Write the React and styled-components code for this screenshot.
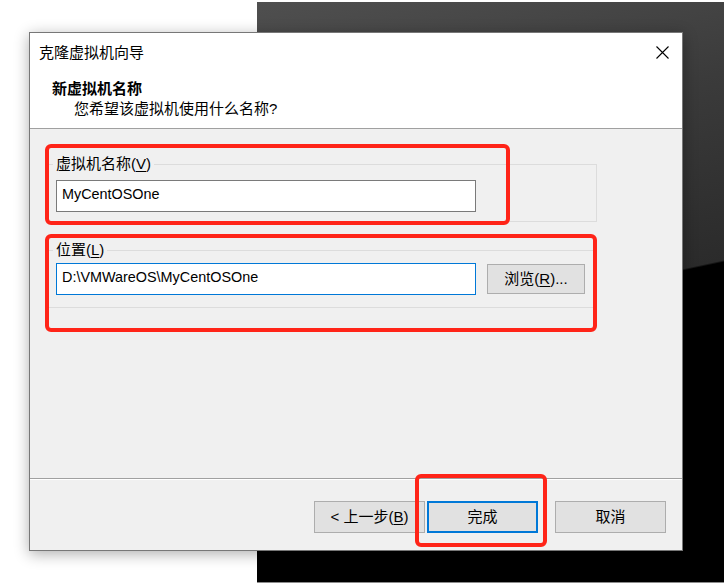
import React from "react";
import styled, { createGlobalStyle } from "styled-components";

const GlobalStyle = createGlobalStyle`
  html, body {
    margin: 0;
    padding: 0;
    background: #ffffff;
  }
  body {
    font-family: "Segoe UI", "Microsoft YaHei UI", "Liberation Sans", "Noto Sans CJK SC", sans-serif;
    color: #000;
  }
`;

const Desktop = styled.div`
  position: relative;
  width: 724px;
  height: 583px;
  overflow: hidden;
  background: #ffffff;
`;

/* dark window sitting behind the wizard */
const BackWindow = styled.div`
  position: absolute;
  left: 257px;
  top: 2px;
  right: 0;
  height: 581px;
  box-sizing: border-box;
  border-bottom: 1px solid #8c8c8c;
  background: linear-gradient(
    168deg,
    #4f4f4f 0%,
    #3b3b3b 25%,
    #2b2b2b 52.6%,
    #000000 52.9%,
    #000000 100%
  );
`;

const Dialog = styled.div`
  position: absolute;
  left: 29px;
  top: 32px;
  width: 654px;
  height: 519px;
  box-sizing: border-box;
  border: 1px solid #777777;
  background: #f0f0f0;
  box-shadow: 0 3px 14px rgba(0, 0, 0, 0.32);
  display: flex;
  flex-direction: column;
  font-size: 15px;
`;

const TitleBar = styled.div`
  height: 39px;
  flex: none;
  display: flex;
  align-items: center;
  padding-left: 9px;
  background: #ffffff;
  line-height: 20px;
`;

const TitleText = styled.span`
  flex: 1;
`;

const CloseIcon = styled.svg`
  width: 13px;
  height: 13px;
  margin-right: 13px;
  display: block;
`;

const Header = styled.div`
  flex: none;
  background: #ffffff;
  padding: 7px 22px 9px;
  border-bottom: 1px solid #a0a0a0;
  line-height: 20px;
`;

const HeaderTitle = styled.div`
  font-weight: 700;
`;

const HeaderSub = styled.div`
  padding-left: 22px;
`;

const Body = styled.div`
  flex: 1;
  display: flex;
  flex-direction: column;
  gap: 18px;
  padding: 25px 85px 0 16px;
`;

const GroupBox = styled.fieldset`
  margin: 0;
  min-width: 0;
  border: 1px solid #dcdcdc;
  padding: ${(p) => p.$pad};
`;

const Legend = styled.legend`
  padding: 0 3px;
  margin-left: -3px;
  line-height: 20px;
  font-size: 15px;
`;

const Key = styled.span`
  text-decoration: underline;
  text-underline-offset: 2px;
`;

const Row = styled.div`
  display: flex;
  align-items: center;
  gap: 11px;
`;

const TextField = styled.input`
  width: 420px;
  height: 32px;
  box-sizing: border-box;
  margin: 0;
  padding: 0 5px 4px;
  border: 1px solid ${(p) => (p.$focused ? "#0078d7" : "#7a7a7a")};
  background: #ffffff;
  font: inherit;
  font-size: 14.4px;
  color: #000;
  outline: none;
`;

const PushButton = styled.button`
  width: ${(p) => p.$w}px;
  height: ${(p) => p.$h}px;
  box-sizing: border-box;
  margin: 0;
  padding: 0;
  border: ${(p) => (p.$default ? "2px solid #0078d7" : "1px solid #adadad")};
  background: #e1e1e1;
  font: inherit;
  font-size: 15px;
  color: #000;
  line-height: 20px;
`;

const Separator = styled.div`
  flex: none;
  border-top: 1px solid #a0a0a0;
  border-bottom: 1px solid #ffffff;
`;

const Footer = styled.div`
  flex: none;
  height: 70px;
  box-sizing: border-box;
  display: flex;
  justify-content: flex-end;
  align-items: flex-start;
  gap: 2px;
  padding: 21px 16px 0 0;
`;

const CancelSlot = styled.div`
  margin-left: 15px;
`;

/* red highlight marks drawn over the dialog */
const Mark = styled.div`
  position: absolute;
  left: ${(p) => p.$x}px;
  top: ${(p) => p.$y}px;
  width: ${(p) => p.$w}px;
  height: ${(p) => p.$h}px;
  box-sizing: border-box;
  border: 4px solid #ff2418;
  border-radius: 6px;
  pointer-events: none;
`;

export default function App() {
  return (
    <>
      <GlobalStyle />
      <Desktop>
        <BackWindow />
        <Dialog>
          <TitleBar>
            <TitleText>克隆虚拟机向导</TitleText>
            <CloseIcon viewBox="0 0 13 13">
              <path d="M0.5 0.5 L12.5 12.5 M12.5 0.5 L0.5 12.5" stroke="#000" strokeWidth="1.1" fill="none" />
            </CloseIcon>
          </TitleBar>
          <Header>
            <HeaderTitle>新虚拟机名称</HeaderTitle>
            <HeaderSub>您希望该虚拟机使用什么名称?</HeaderSub>
          </Header>
          <Body>
            <GroupBox $pad="6px 0 9px 9px">
              <Legend>
                虚拟机名称(<Key>V</Key>)
              </Legend>
              <TextField readOnly value="MyCentOSOne" />
            </GroupBox>
            <GroupBox $pad="3px 0 12px 9px">
              <Legend>
                位置(<Key>L</Key>)
              </Legend>
              <Row>
                <TextField $focused readOnly value="D:\VMWareOS\MyCentOSOne" />
                <PushButton $w={98} $h={30}>
                  浏览(<Key>R</Key>)...
                </PushButton>
              </Row>
            </GroupBox>
          </Body>
          <Separator />
          <Footer>
            <PushButton $w={111} $h={32}>
              &lt; 上一步(<Key>B</Key>)
            </PushButton>
            <PushButton $w={111} $h={32} $default>
              完成
            </PushButton>
            <CancelSlot>
              <PushButton $w={111} $h={32}>
                取消
              </PushButton>
            </CancelSlot>
          </Footer>
        </Dialog>
        <Mark $x={45} $y={144} $w={465} $h={81} />
        <Mark $x={45} $y={234} $w={552} $h={98} />
        <Mark $x={415} $y={474} $w={132} $h={73} />
      </Desktop>
    </>
  );
}
